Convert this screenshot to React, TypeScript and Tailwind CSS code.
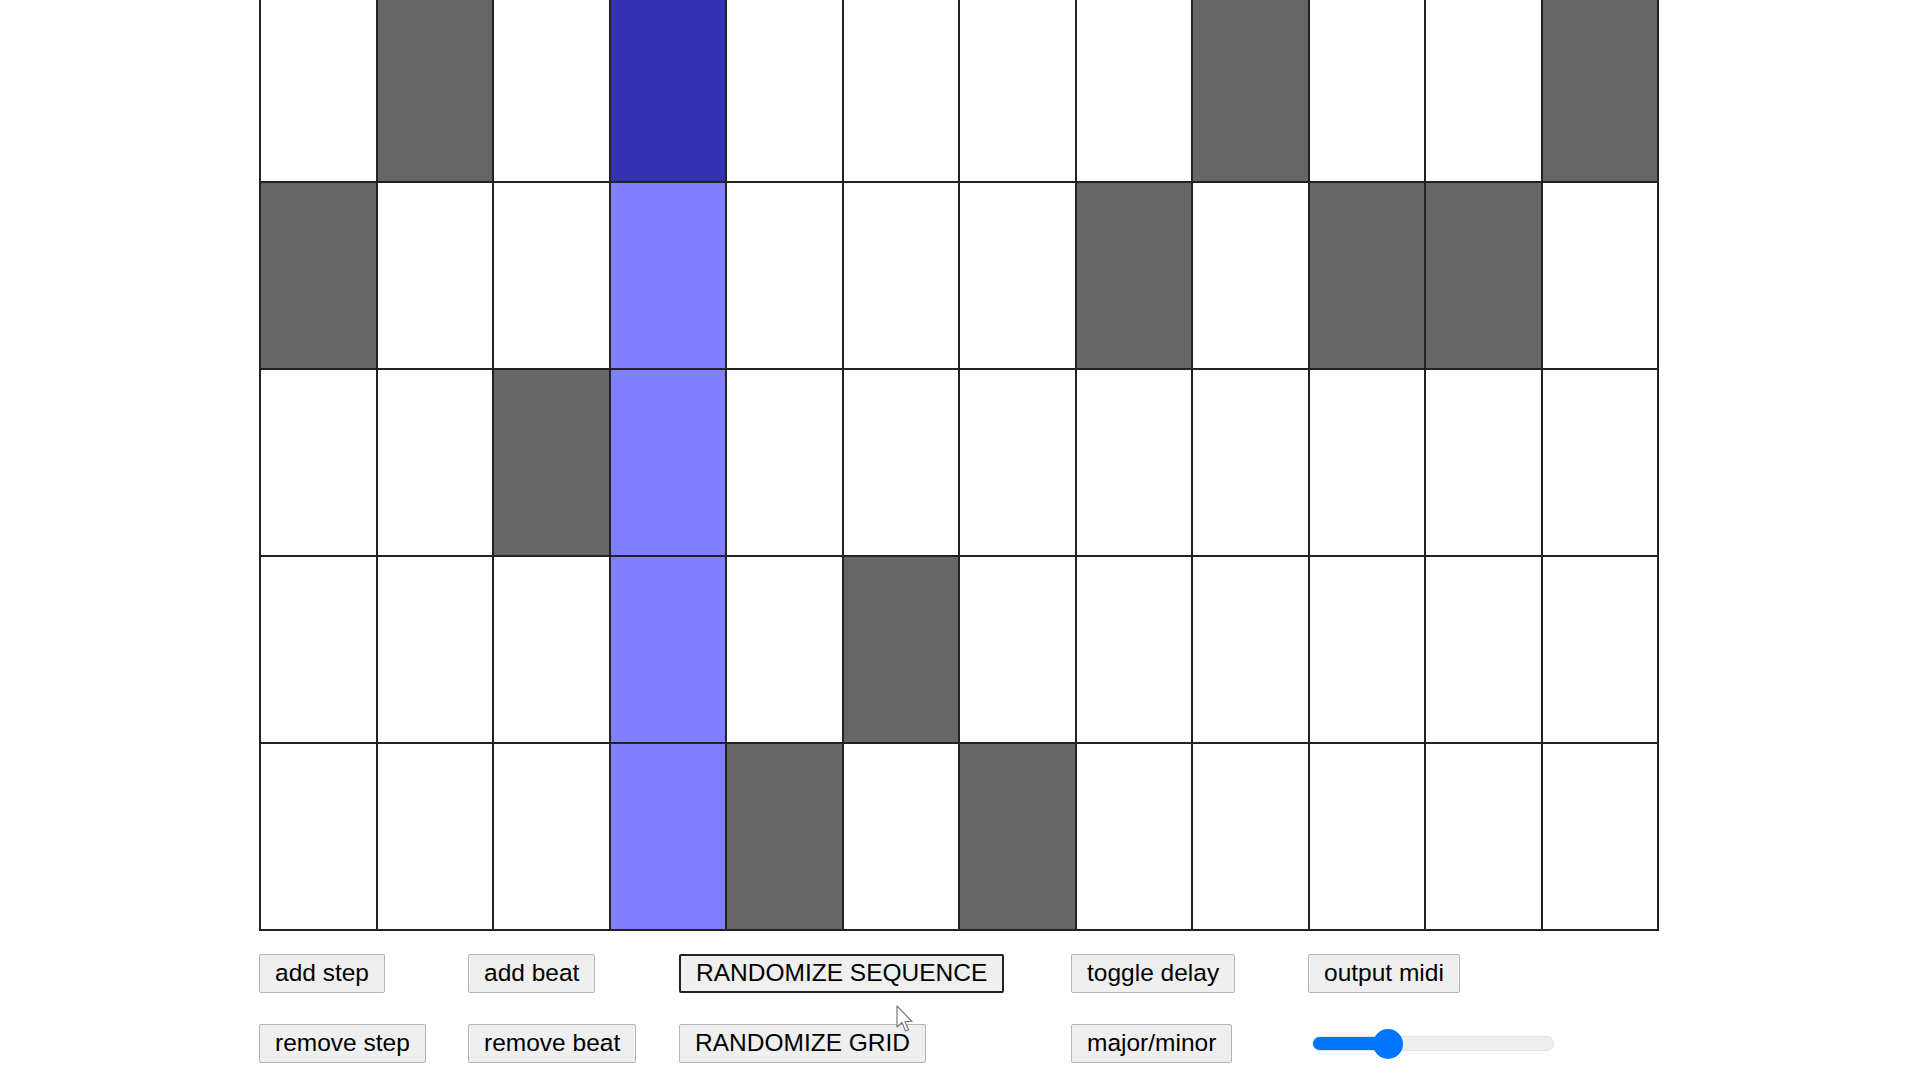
import React from "react";

const ROWS = 5;
const COLS = 12;
const PLAYHEAD = 3;

// active steps per row
const active: number[][] = [
  [1, 3, 8, 11],
  [0, 7, 9, 10],
  [2],
  [5],
  [4, 6],
];

function cellColor(r: number, c: number) {
  const on = active[r].includes(c);
  if (c === PLAYHEAD) return on ? "bg-[#3232b2]" : "bg-[#8080ff]";
  return on ? "bg-[#666666]" : "bg-white";
}

function Btn({ label, focused }: { label: string; focused?: boolean }) {
  return (
    <button
      className={
        "h-[39px] px-[15px] bg-[#efefef] text-black text-[24.5px] leading-none rounded-[2px] whitespace-nowrap " +
        (focused ? "border-2 border-[#222] px-[15.5px]" : "border border-[#b4b4b4]")
      }
    >
      {label}
    </button>
  );
}

function Slider() {
  return (
    <div className="relative w-[242px] h-[30px] flex items-center ml-[4px]">
      <div className="w-full h-[15px] rounded-full bg-[#efefef] border border-[#e2e2e2] overflow-hidden">
        <div className="h-full w-[76px] bg-[#0075ff]" />
      </div>
      <div className="absolute left-[61px] top-0 w-[30px] h-[30px] rounded-full bg-[#0075ff]" />
    </div>
  );
}

export default function App() {
  return (
    <div
      className="relative w-[1920px] h-[1080px] bg-white overflow-hidden"
      style={{ fontFamily: '"Liberation Sans", Arial, sans-serif' }}
    >
      {/* step grid */}
      <div className="ml-[259px] w-[1400px] border-l-2 border-[#222] grid grid-cols-[repeat(12,116.5px)] grid-rows-[183px_187px_187px_187px_187px]">
        {Array.from({ length: ROWS }).map((_, r) =>
          Array.from({ length: COLS }).map((_, c) => (
            <div
              key={`${r}-${c}`}
              className={`border-r-2 border-b-2 border-[#222] ${cellColor(r, c)}`}
            />
          ))
        )}
      </div>

      {/* controls */}
      <div className="ml-[259px] mt-[23px] grid grid-cols-[209px_211px_392px_237px_auto] gap-y-[31px] items-center">
        <div><Btn label="add step" /></div>
        <div><Btn label="add beat" /></div>
        <div><Btn label="RANDOMIZE SEQUENCE" focused /></div>
        <div><Btn label="toggle delay" /></div>
        <div><Btn label="output midi" /></div>

        <div><Btn label="remove step" /></div>
        <div><Btn label="remove beat" /></div>
        <div><Btn label="RANDOMIZE GRID" /></div>
        <div><Btn label="major/minor" /></div>
        <div><Slider /></div>
      </div>

      {/* mouse pointer */}
      <svg
        className="absolute left-[896px] top-[1005px]"
        width="18"
        height="28"
        viewBox="0 0 18 28"
      >
        <path
          d="M1 1 L1 22 L6 17.5 L9.5 26 L12.5 24.8 L9 16.5 L16 16.5 Z"
          fill="white"
          stroke="#7a7a7a"
          strokeWidth="1.2"
          strokeLinejoin="round"
        />
      </svg>
    </div>
  );
}
